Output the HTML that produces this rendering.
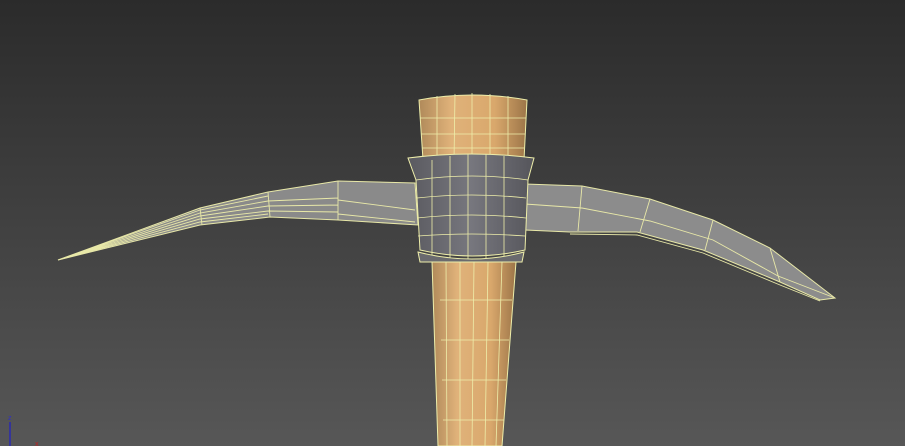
<!DOCTYPE html>
<html><head><style>html,body{margin:0;padding:0;width:905px;height:446px;overflow:hidden;background:#404040}</style></head>
<body>
<svg width="905" height="446" viewBox="0 0 905 446" xmlns="http://www.w3.org/2000/svg">
<defs>
<linearGradient id="bg" x1="0" y1="0" x2="0" y2="1">
<stop offset="0" stop-color="#2b2b2b"/><stop offset="1" stop-color="#575757"/></linearGradient>
<linearGradient id="wood" x1="0" y1="0" x2="1" y2="0">
<stop offset="0" stop-color="#b08a5a"/><stop offset="0.3" stop-color="#e0b27a"/><stop offset="0.7" stop-color="#d9a86c"/><stop offset="1" stop-color="#9c7548"/></linearGradient>
<linearGradient id="metal" x1="0" y1="0" x2="1" y2="0">
<stop offset="0" stop-color="#5a5a60"/><stop offset="0.5" stop-color="#77777e"/><stop offset="1" stop-color="#55555b"/></linearGradient>
</defs>
<rect width="905" height="446" fill="url(#bg)"/>
<!-- left pick -->
<path d="M58 260 L200 208 L268 192 L338 181 L415 183 L418 225 L338 220 L270 217 L200 225 Z" fill="#8a8a8a" stroke="#e8e8a8" stroke-width="1"/>
<path d="M58 260 L200 210 L268 196 M58 260 L200 213 L268 201 L338 198 M58 260 L200 216 L268 206 L338 205 M58 260 L200 219 L268 211 L338 212 M58 260 L200 222 L268 214 M338 200 L415 210 M338 214 L415 222 M200 208 L202 225 M268 192 L270 217 M338 181 L338 220" stroke="#e8e8a8" stroke-width="0.9" fill="none"/>
<!-- right pick -->
<path d="M525 184 L582 186 L650 199 L713 220 L770 248 L835 298 L820 300 L780 282 L703 250 L637 232 L570 232 L525 230Z" fill="#8c8c8c" stroke="#e8e8a8" stroke-width="1"/>
<path d="M525 204 L582 208 L650 221 L713 240 L778 276 L835 298 M582 186 L578 231 M650 199 L640 232 M713 220 L705 250 M770 248 L780 282 M570 234 L637 235 L703 253 L780 285 L820 301" stroke="#e8e8a8" stroke-width="0.9" fill="none"/>
<!-- lower handle -->
<path d="M432 262 L516 262 L502 446 L438 446Z" fill="url(#wood)" stroke="#eeeeaa" stroke-width="1"/>
<path d="M446 262 L447 446 M460 262 L460 446 M474 262 L472 446 M488 262 L485 446 M502 262 L496 446 M440 300 L512 300 M441 340 L509 340 M442 380 L506 380 M443 420 L504 420" stroke="#eeeeaa" stroke-width="0.8" fill="none"/>
<!-- top cap -->
<path d="M419 100 Q472 90 527 100 L524 160 L423 160Z" fill="url(#wood)" stroke="#eeeeaa" stroke-width="1"/>
<path d="M420 118 L526 118 M421 134 L525 134 M422 148 L524 148 M437 96 L437 160 M455 94 L454 160 M472 93 L472 160 M490 94 L490 160 M508 96 L508 160" stroke="#eeeeaa" stroke-width="0.8" fill="none"/>
<!-- collar -->
<path d="M408 158 Q472 150 534 158 L528 180 L525 250 Q472 262 420 250 L416 180Z" fill="url(#metal)" stroke="#eeeeaa" stroke-width="1"/>
<path d="M416 180 Q472 172 528 180 M417 198 Q472 192 526 198 M417 218 Q472 212 526 218 M418 236 Q472 232 525 236 M432 160 L432 255 M450 156 L450 258 M468 154 L468 260 M486 154 L486 260 M504 156 L504 258" stroke="#eeeeaa" stroke-width="0.8" fill="none"/>
<path d="M418 252 Q472 266 524 252 L522 262 L420 262Z" fill="#6a6a6e" stroke="#eeeeaa" stroke-width="1"/>
<!-- axis gizmo -->
<line x1="10" y1="422" x2="10" y2="446" stroke="#2a2ab0" stroke-width="1.5"/>
<text x="8" y="420" font-family="Liberation Sans, sans-serif" font-size="7" fill="#3030c0">z</text>
<text x="35" y="446" font-family="Liberation Sans, sans-serif" font-size="7" fill="#c02020">x</text>
</svg>
</body></html>
